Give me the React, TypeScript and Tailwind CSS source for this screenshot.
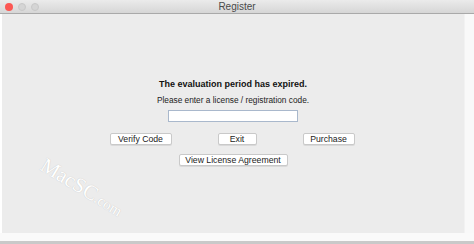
import React from 'react';

const Btn: React.FC<{ label: string; w: string }> = ({ label, w }) => (
  <button
    className={`${w} h-[12px] bg-white border border-[#c9c9c9] rounded-[2px] shadow-[0_1px_0_rgba(0,0,0,0.08)] text-[8.7px] leading-[10px] text-[#222] flex items-center justify-center`}
  >
    {label}
  </button>
);

const App: React.FC = () => {
  return (
    <div className="w-[474px] h-[244px] bg-white flex flex-col overflow-hidden font-['Liberation_Sans',Arial,sans-serif]">
      {/* title bar */}
      <div className="relative h-[14px] shrink-0 bg-gradient-to-b from-[#ebebeb] to-[#d6d6d6] border-b border-[#a9a9a9] flex items-center justify-center">
        <div className="absolute left-[5px] top-[3px] flex gap-[5px]">
          <span className="w-[8px] h-[8px] rounded-full bg-[#fc5753]" />
          <span className="w-[8px] h-[8px] rounded-full bg-[#d5d5d5] border border-[#c8c8c8]" />
          <span className="w-[8px] h-[8px] rounded-full bg-[#d5d5d5] border border-[#c8c8c8]" />
        </div>
        <span className="text-[10px] leading-[12px] text-[#4a4a4a]">Register</span>
      </div>

      <div className="flex h-[219px] shrink-0">
        <div className="relative ml-[2px] w-[462px] bg-[#ececec] flex flex-col items-center pt-[64px]">
          <p className="text-[9px] leading-[12px] font-bold text-[#111]">The evaluation period has expired.</p>
          <p className="mt-[4px] text-[8.3px] leading-[12px] text-[#222]">Please enter a license / registration code.</p>
          <input className="mt-[4px] w-[130px] h-[12px] bg-white border border-[#a9b8cc] outline-none" />
          <div className="mt-[11px] flex gap-[46px] -ml-[2px]">
            <Btn label="Verify Code" w="w-[62px]" />
            <Btn label="Exit" w="w-[39px]" />
            <Btn label="Purchase" w="w-[52px]" />
          </div>
          <div className="mt-[9px]">
            <Btn label="View License Agreement" w="w-[109px]" />
          </div>

          {/* watermark */}
          <div className="absolute left-[40px] top-[136px] rotate-[31deg] origin-left font-['Liberation_Serif',serif] text-[21px] text-white [text-shadow:0_0_1px_rgba(0,0,0,0.22)] select-none whitespace-nowrap leading-[26px]">
            MacSC<span className="text-[15px]">.com</span>
          </div>
        </div>
        <div className="flex-1 bg-[#f9f9f9] border-l border-[#f2f2f2]" />
      </div>

      <div className="h-[8px] shrink-0 bg-[#fafafa]" />
      <div className="flex-1 bg-[#c9c9c9]" />
    </div>
  );
};

export default App;
